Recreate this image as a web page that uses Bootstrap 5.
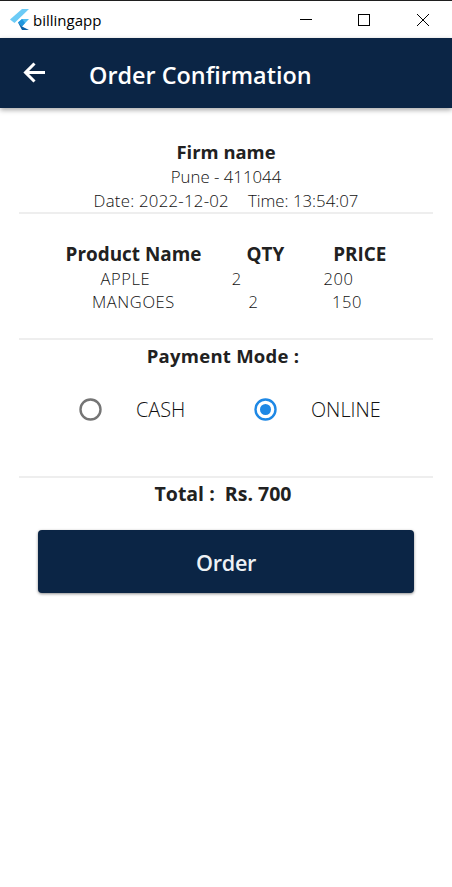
<!DOCTYPE html>
<html lang="en">
<head>
<meta charset="utf-8">
<title>billingapp</title>
<link href="https://cdn.jsdelivr.net/npm/bootstrap@5.3.0/dist/css/bootstrap.min.css" rel="stylesheet">
<style>
html,body{height:100%;background:#fff;}
body{font-family:"Open Sans","Noto Sans",sans-serif;color:#212121;overflow:hidden;}
.win-top{height:1px;background:#1f1f1f;}
.title-bar{height:37px;padding-left:9px;}
.app-name{font-size:15px;color:#000;margin-left:3px;line-height:20px;}
.win-btns{width:174px;}
.win-btn{width:58px;height:37px;}
.icon-shift{margin-right:2px;}
.app-head{height:70px;background:#0b2545;box-shadow:0 2px 5px rgba(0,0,0,.35);color:#fff;padding-left:23px;position:relative;}
.head-title{font-size:23.4px;font-weight:600;margin-left:43px;line-height:30px;margin-top:4px;}
.back-arrow{margin-top:-2px;}
.page-body{padding:30px 19px 0;}
.firm{font-size:18.4px;font-weight:700;line-height:27px;}
.info-line{font-size:16.8px;font-weight:300;line-height:23px;color:#111;}
.pune-line{margin-bottom:1px;}
.date-part{letter-spacing:.25px;}
.info-gap{margin-left:19px;}
.rule{height:2px;background:#eeeeee;}
.goods{padding-top:27px;height:124px;}
.goods-row{gap:47px;}
.goods-head{font-size:18.9px;font-weight:700;line-height:26px;}
.qty-cell{margin-left:-2px;margin-right:2px;}
.goods-line{font-size:16.5px;font-weight:300;line-height:23px;letter-spacing:.6px;color:#111;padding-left:2px;}
.gap-a{gap:81.5px;}
.gap-b{gap:73.5px;}
.pay-title{font-size:18.5px;font-weight:700;line-height:27px;letter-spacing:.25px;padding-top:2px;padding-right:6px;}
.pay-box{height:107px;padding-top:13px;}
.pay-row{height:55px;padding-left:60px;}
.radio-dot{width:23px;height:23px;flex:none;}
.cash-opt{width:175px;}
.pay-label{font-size:19.8px;font-weight:300;margin-left:34px;line-height:26px;color:#111;}
.total-line{font-size:19.5px;font-weight:700;line-height:28px;padding-top:2px;height:30px;padding-right:6px;}
.order-btn{display:block;width:375.5px;height:63px;margin:22px auto 0 19.3px;padding-top:9px;background:#0b2545;border:0;border-radius:4px;color:#eef1f5;font-size:21.6px;font-weight:600;box-shadow:0 1px 3px rgba(0,0,0,.45);letter-spacing:-.3px;}
</style>
</head>
<body>
<div class="win-top"></div>
<div class="title-bar d-flex align-items-center justify-content-between">
  <div class="d-flex align-items-center">
    <svg width="21" height="22" viewBox="0 0 21 22"><polygon points="13,0 20,0 5.500,14 1,10.500" fill="#6ccbf6"/><polygon points="13,10 20,10 13,17.500 9,13.500" fill="#4dbbef"/><polygon points="9,13.500 13,10 16,14 13,17.500" fill="#2196dc"/><polygon points="9,13.500 13,17.500 20,21 13,21" fill="#0b5fa5"/></svg>
    <span class="app-name">billingapp</span>
  </div>
  <div class="win-btns d-flex">
    <div class="win-btn d-flex align-items-center justify-content-center"><svg class="icon-shift" width="12" height="12" viewBox="0 0 12 12"><path d="M0 5.500H12" stroke="#000" fill="none"/></svg></div>
    <div class="win-btn d-flex align-items-center justify-content-center"><svg class="icon-shift" width="12" height="12" viewBox="0 0 12 12"><rect x=".5" y=".5" width="11" height="11" stroke="#000" fill="none"/></svg></div>
    <div class="win-btn d-flex align-items-center justify-content-center"><svg width="12" height="12" viewBox="0 0 12 12"><path d="M0 0L12 12M12 0L0 12" stroke="#000" stroke-width="1" fill="none"/></svg></div>
  </div>
</div>
<header class="app-head d-flex align-items-center">
  <svg class="back-arrow" width="23" height="21" viewBox="0 0 23 21"><path d="M22 10.500H2.500M11.500 1.500L2.500 10.500L11.500 19.500" stroke="#fff" stroke-width="3" fill="none"/></svg>
  <div class="head-title">Order Confirmation</div>
</header>
<main class="page-body text-center">
  <div class="firm">Firm name</div>
  <div class="info-line pune-line">Pune - 411044</div>
  <div class="info-line"><span class="date-part">Date: 2022-12-02</span><span class="info-gap">Time: 13:54:07</span></div>
  <div class="rule"></div>
  <div class="goods">
    <div class="goods-head goods-row d-flex justify-content-center"><span>Product Name</span><span class="qty-cell">QTY</span><span>PRICE</span></div>
    <div class="goods-line gap-a d-flex justify-content-center"><span>APPLE</span><span>2</span><span>200</span></div>
    <div class="goods-line gap-b d-flex justify-content-center"><span>MANGOES</span><span>2</span><span>150</span></div>
  </div>
  <div class="rule"></div>
  <div class="pay-title">Payment Mode :</div>
  <div class="pay-box">
    <div class="pay-row d-flex align-items-center text-start">
      <div class="cash-opt d-flex align-items-center">
        <svg class="radio-dot" viewBox="0 0 23 23"><circle cx="11.500" cy="11.500" r="10" stroke="#757575" stroke-width="2.400" fill="none"/></svg>
        <span class="pay-label">CASH</span>
      </div>
      <div class="d-flex align-items-center">
        <svg class="radio-dot" viewBox="0 0 23 23"><circle cx="11.500" cy="11.500" r="10" stroke="#1e88e5" stroke-width="2.400" fill="none"/><circle cx="11.500" cy="11.500" r="5.500" fill="#1e88e5"/></svg>
        <span class="pay-label">ONLINE</span>
      </div>
    </div>
  </div>
  <div class="rule"></div>
  <div class="total-line">Total :&nbsp; Rs. 700</div>
  <button type="button" class="btn order-btn">Order</button>
</main>
<script src="https://cdn.jsdelivr.net/npm/bootstrap@5.3.0/dist/js/bootstrap.bundle.min.js"></script>
</body>
</html>
